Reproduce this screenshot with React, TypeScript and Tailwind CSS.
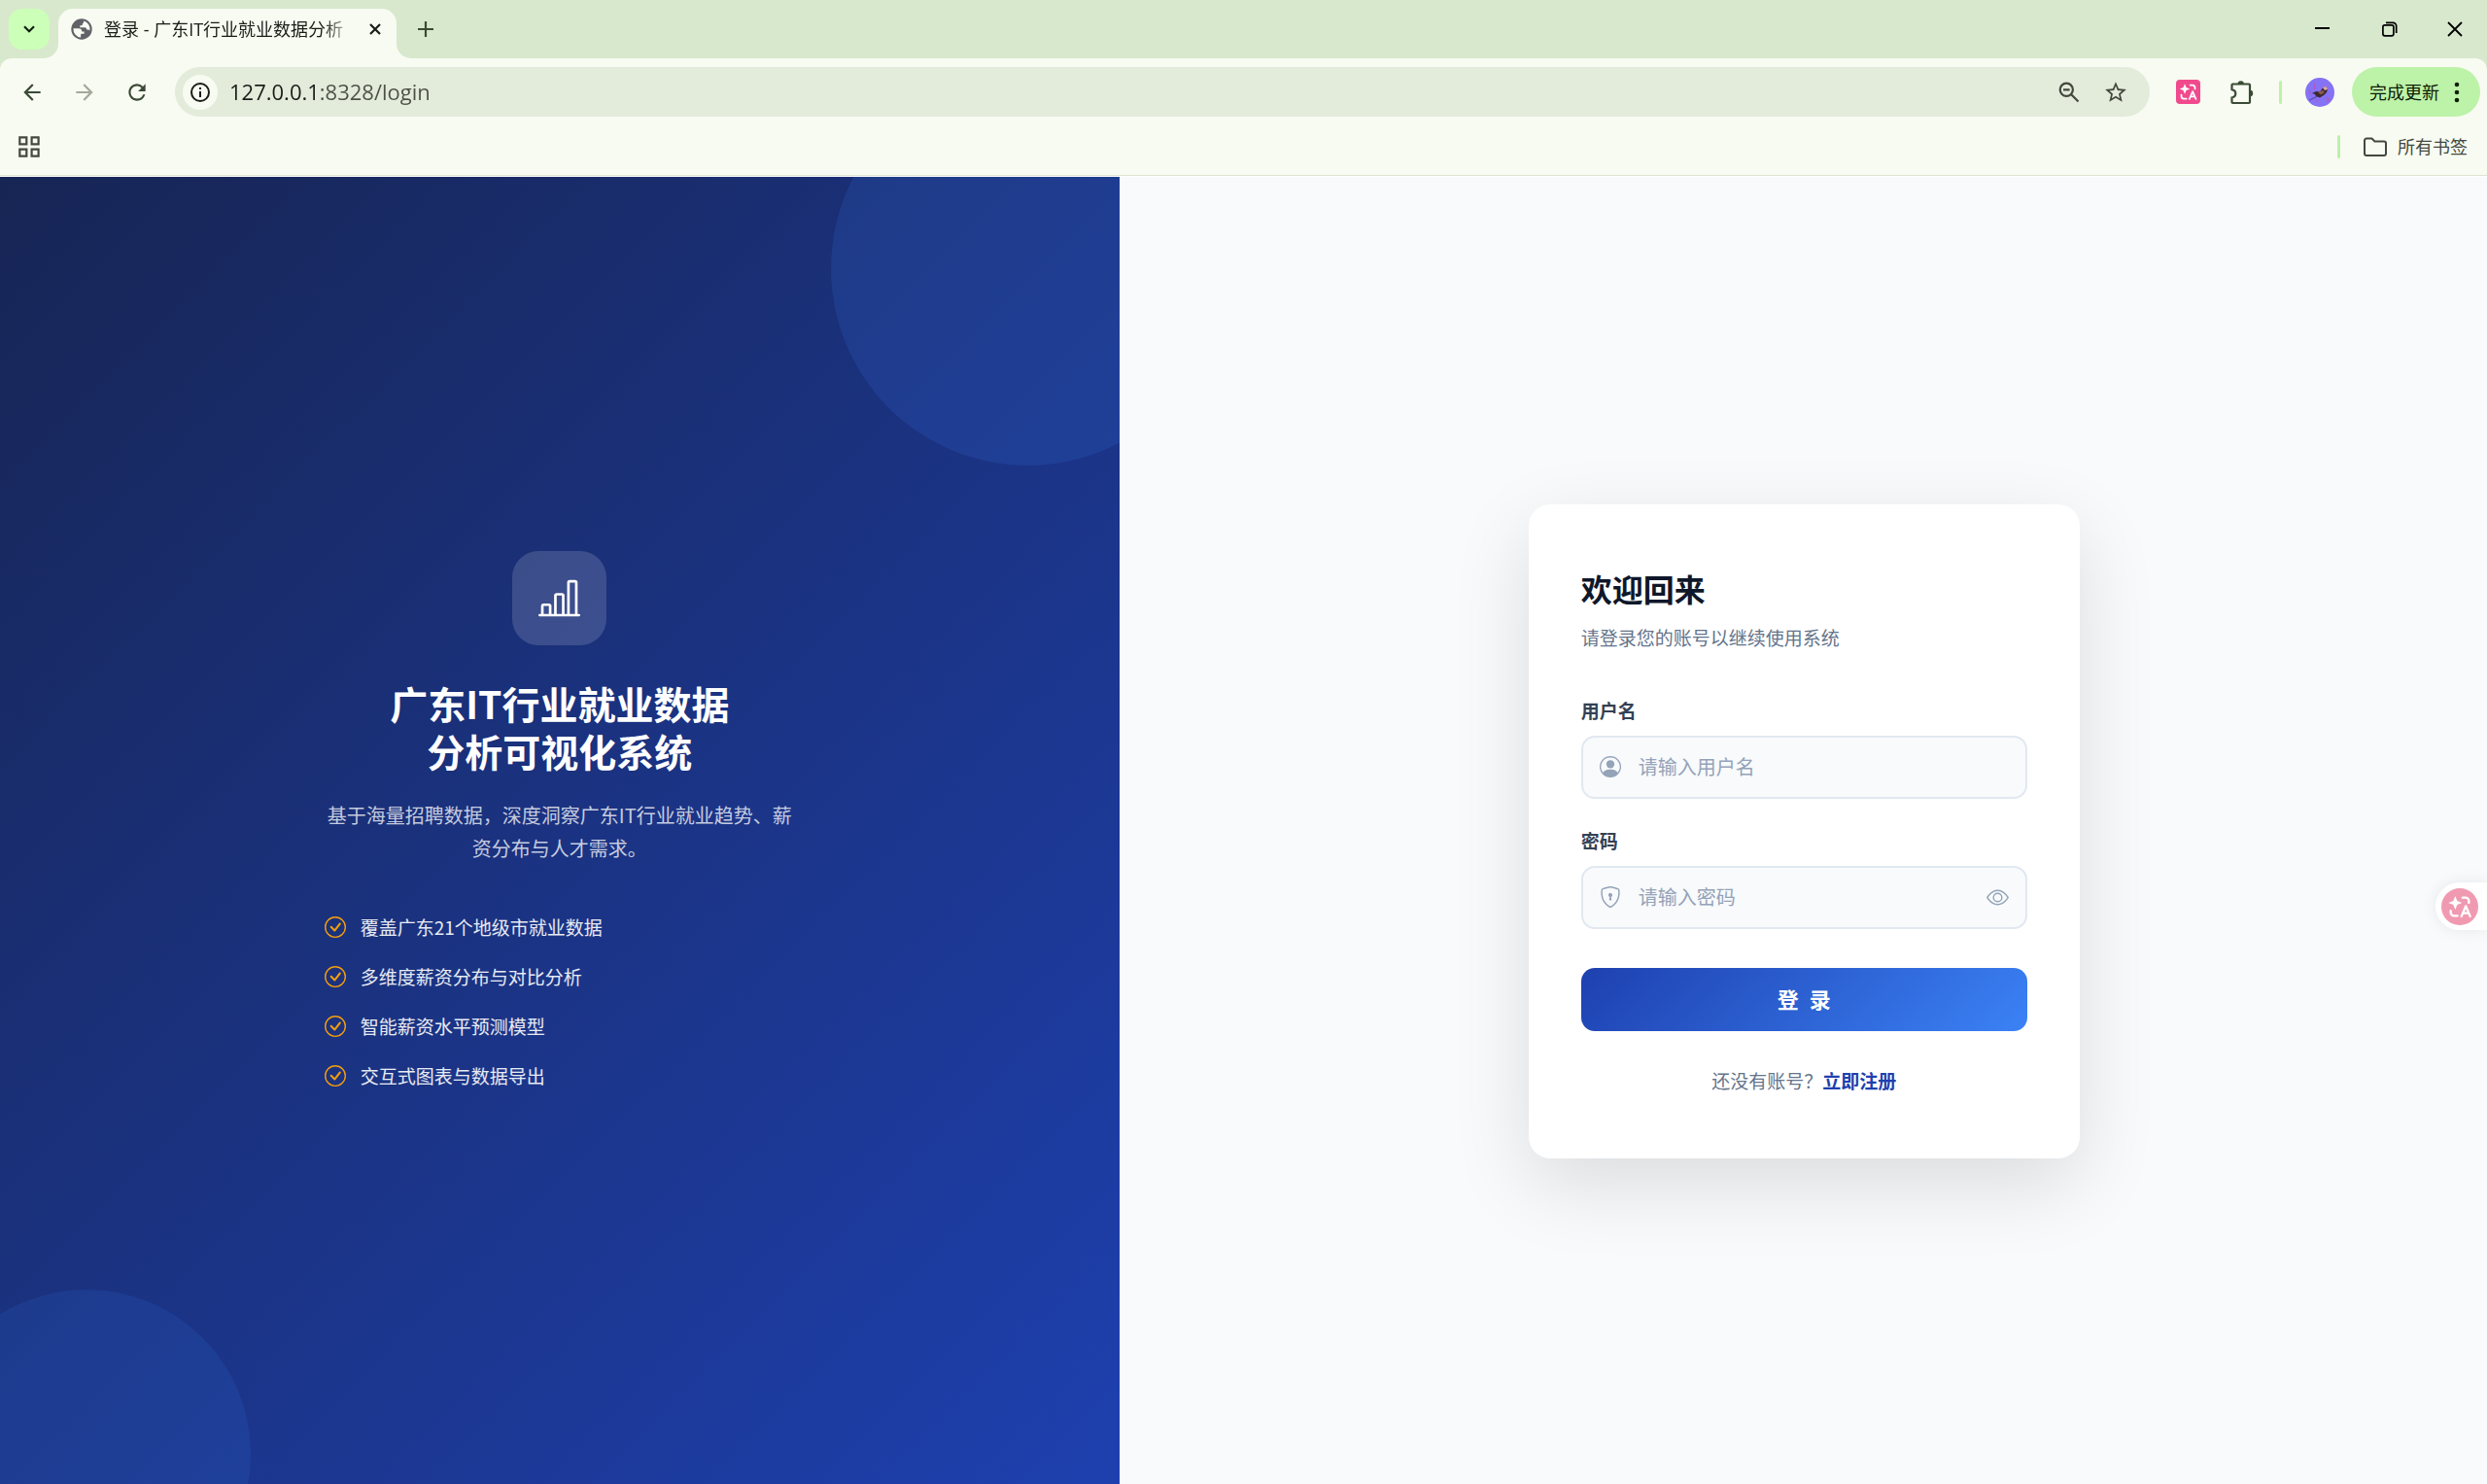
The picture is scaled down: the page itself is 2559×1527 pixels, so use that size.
import React from "react";
import {
  BsBarChartLine,
  BsCheckCircle,
  BsEye,
  BsPersonCircle,
  BsShieldLock,
} from "react-icons/bs";
import {
  MdArrowBack,
  MdArrowForward,
  MdRefresh,
  MdStarBorder,
} from "react-icons/md";

const uiFont = "font-['Open_Sans','Noto_Sans_CJK_SC',sans-serif]";
const pageFont = "font-['Noto_Sans_CJK_SC',sans-serif]";

function Globe() {
  return (
    <svg viewBox="0 0 22 22" className="size-[22px] shrink-0" aria-hidden="true">
      <circle cx="11" cy="11" r="10.7" fill="#5f6368" />
      <path
        d="M12.9 2.600A8.600 8.600 0 0 1 19.500 12.500c-.5-.7-1.200-1-2.100-1h-1.200c0-1.500-.8-2.300-2.200-2.300H9.300V7.300h1.200c1 0 1.500-.6 1.400-1.500-.1-.6.2-.9.8-1 .6-.3.500-1.200.2-2.200Z"
        fill="#f8fbf1"
      />
      <path
        d="M2.500 10.200h5.300c2.400 0 3.500 1.200 3.500 3.300h2.300v2.300h-2.300c-.8 0-1.200.4-1.200 1.200v2.500A8.600 8.600 0 0 1 2.500 10.200Z"
        fill="#f8fbf1"
      />
    </svg>
  );
}

function Puzzle() {
  return (
    <svg viewBox="0 0 26 26" className="size-[26px]" fill="none" aria-hidden="true">
      <path
        d="M3 4.500h17a1 1 0 0 1 1 1V23a1 1 0 0 1-1 1H3.500a1 1 0 0 1-1-1v-4.500c2.500-.5 3.800-2 3.800-4.200s-1.300-3.700-3.800-4.200V5.500a1 1 0 0 1 1-1Z"
        stroke="#3a4a35"
        strokeWidth="2.200"
      />
      <path d="M8.500 4.500a3.200 3.200 0 0 1 6.400 0ZM21 10.800a3.200 3.200 0 0 1 0 6.400Z" fill="#3a4a35" />
    </svg>
  );
}

function TranslateGlyph({ className }: { className: string }) {
  return (
    <svg viewBox="0 0 24 24" className={className} fill="none" aria-hidden="true">
      <path d="M8 2.500 9.700 6.800l4.300 1.700-4.300 1.700L8 14.500l-1.700-4.300L2 8.500l4.300-1.700Z" fill="#fff" />
      <path
        d="M14.500 4H17a3 3 0 0 1 3 3v1.500M4 15.500V17a3 3 0 0 0 3 3h3"
        stroke="#fff"
        strokeWidth="2"
        strokeLinecap="round"
      />
      <path
        d="m13.500 20.500 3.800-9 3.800 9M14.800 17.700h5"
        stroke="#fff"
        strokeWidth="2"
        strokeLinecap="round"
        strokeLinejoin="round"
      />
    </svg>
  );
}

function Avatar() {
  return (
    <svg viewBox="0 0 30 30" className="size-[30px]" aria-hidden="true">
      <circle cx="15" cy="15" r="15" fill="#8672f5" />
      <path d="M4 22.500 13 18l-1 2-8 4Z" fill="#5b50b8" />
      <path d="M9 6l1 3-1 3M22 20l2 2-1 3M4 13l1 4M11 24l2-1" stroke="#b05ac0" strokeWidth="1.500" fill="none" />
      <path d="M7 16l4-2 4 .5 3-4 4-1.500 1 3-1 3-3 3-4 2.500-4-1.500-1-2Z" fill="#3c2a33" />
      <path d="M18 10l4-1 1 3-3 1Z" fill="#e0a99a" />
      <path d="M13 15l5-2 2 2-4 2.500Z" fill="#8b5a4e" />
    </svg>
  );
}

function TabStrip() {
  return (
    <div className="flex h-[60px] items-start bg-[#d8e8cd]">
      <div className="flex h-full w-[60px] flex-col bg-[#f8fbf1]">
        <div className="h-full rounded-br-[15px] bg-[#d8e8cd] pl-[9px] pt-[9px]">
          <button
            aria-label="搜索标签页"
            className="flex size-[42px] items-center justify-center rounded-[14px] bg-[#ccffb8]"
          >
            <svg viewBox="0 0 12 8" className="h-2 w-3" fill="none" aria-hidden="true">
              <path d="m1 1.200 5 5 5-5" stroke="#10200f" strokeWidth="2.200" />
            </svg>
          </button>
        </div>
      </div>
      <div className="h-full bg-[#d8e8cd] pt-[9px]">
        <div className="flex h-[51px] w-[348px] items-center rounded-t-[15px] bg-[#f8fbf1] pb-[9px] pl-[13px] pr-3">
          <Globe />
          <span className="ml-3 flex-1 whitespace-nowrap text-lg text-[#1b1c18] [mask-image:linear-gradient(to_right,black_225px,transparent_260px)]">
            登录 - 广东IT行业就业数据分析
          </span>
          <button aria-label="关闭标签页" className="ml-4 flex size-5 items-center justify-center">
            <svg viewBox="0 0 12 12" className="size-3" fill="none" aria-hidden="true">
              <path d="m1 1 10 10M11 1 1 11" stroke="#1b1c18" strokeWidth="2.200" />
            </svg>
          </button>
        </div>
      </div>
      <div className="h-full flex-1 bg-[#f8fbf1]">
        <div className="flex h-full items-start justify-between rounded-bl-[15px] bg-[#d8e8cd] pl-[22px]">
          <button aria-label="新标签页" className="mt-[22px] flex size-4 items-center justify-center">
            <svg viewBox="0 0 16 16" className="size-4" fill="none" aria-hidden="true">
              <path d="M8 0v16M0 8h16" stroke="#3a4a35" strokeWidth="2.200" />
            </svg>
          </button>
          <div className="flex h-[60px] items-center">
            <button aria-label="最小化" className="flex h-full w-[69px] items-center justify-center">
              <svg viewBox="0 0 16 16" className="size-4" aria-hidden="true">
                <path d="M0 7h15" stroke="#000" strokeWidth="2" />
              </svg>
            </button>
            <button aria-label="还原" className="flex h-full w-[69px] items-center justify-center">
              <svg viewBox="0 0 16 16" className="size-4" fill="none" stroke="#000" strokeWidth="1.700" aria-hidden="true">
                <rect x="0.900" y="3.800" width="11" height="11" rx="2" />
                <path d="M4 1.300h7.200a3.500 3.500 0 0 1 3.500 3.500V12" />
              </svg>
            </button>
            <button aria-label="关闭" className="flex h-full w-[66px] items-center justify-center">
              <svg viewBox="0 0 16 16" className="size-4" fill="none" aria-hidden="true">
                <path d="m1 1 14 14M15 1 1 15" stroke="#000" strokeWidth="1.800" />
              </svg>
            </button>
          </div>
        </div>
      </div>
    </div>
  );
}

function Toolbar() {
  return (
    <div className="bg-[#d8e8cd]">
      <div className="flex h-[69px] items-center rounded-t-[12px] bg-[#f8fbf1] pl-5 pr-[7px]">
        <button aria-label="后退" className="text-[#3a4a35]">
          <MdArrowBack className="size-[26px]" />
        </button>
        <button aria-label="前进" className="ml-7 text-[#a3aa9c]">
          <MdArrowForward className="size-[26px]" />
        </button>
        <button aria-label="重新加载" className="ml-7 text-[#3a4a35]">
          <MdRefresh className="size-[26px]" />
        </button>
        <div className="ml-[26px] flex h-[51px] flex-1 items-center rounded-full bg-[#e3ecdb] pl-2 pr-[22px]">
          <button
            aria-label="查看网站信息"
            className="flex size-9 shrink-0 items-center justify-center rounded-full bg-[#f8fbf1]"
          >
            <svg viewBox="0 0 20 20" className="size-5" fill="none" stroke="#1b1c18" strokeWidth="2" aria-hidden="true">
              <circle cx="10" cy="10" r="9" />
              <path d="M10 9v6M10 5v2" />
            </svg>
          </button>
          <input
            aria-label="地址"
            defaultValue="127.0.0.1:8328/login"
            className="ml-3 min-w-0 flex-1 bg-[linear-gradient(to_right,#1b1c18_90px,#4c5147_90px)] bg-clip-text pb-[2px] text-[22px] leading-[34px] text-transparent caret-[#1b1c18] outline-none"
          />
          <button aria-label="缩放">
            <svg viewBox="0 0 22 22" className="size-[22px]" fill="none" stroke="#43483e" strokeWidth="2.200" aria-hidden="true">
              <circle cx="8.300" cy="8.300" r="6.600" />
              <path d="m13 13 7.500 7.500M5 8.300h6.600" />
            </svg>
          </button>
          <button aria-label="为此标签页添加书签" className="ml-6 text-[#43483e]">
            <MdStarBorder className="size-[26px]" />
          </button>
        </div>
        <button
          aria-label="翻译扩展"
          className="ml-[27px] flex size-[25px] items-center justify-center rounded-[4px] bg-[#f04a8d]"
        >
          <TranslateGlyph className="size-[21px]" />
        </button>
        <button aria-label="扩展程序" className="ml-[30px]">
          <Puzzle />
        </button>
        <div className="ml-[25px] h-6 w-[3px] rounded-full bg-[#bdf2a9]" />
        <button aria-label="个人资料" className="ml-6">
          <Avatar />
        </button>
        <button className="ml-[18px] flex h-[51px] w-[132px] items-center rounded-full bg-[#bdf2a9] pl-[18px] text-lg text-[#0c2006]">
          完成更新
          <svg viewBox="0 0 6 22" className="ml-[15px] h-[22px] w-[6px]" fill="#0c2006" aria-hidden="true">
            <circle cx="3" cy="3" r="2.300" />
            <circle cx="3" cy="11" r="2.300" />
            <circle cx="3" cy="19" r="2.300" />
          </svg>
        </button>
      </div>
    </div>
  );
}

function BookmarkBar() {
  return (
    <div className="border-b border-[#dfe3d3] bg-[#f8fbf1]">
      <div className="flex h-[51px] items-center justify-between pb-2 pl-[19px] pr-5">
        <button aria-label="应用">
          <svg viewBox="0 0 22 22" className="size-[22px]" fill="none" stroke="#43483e" strokeWidth="2.200" aria-hidden="true">
            <path d="M1.300 1.300h7v7h-7ZM13.600 1.300h7v7h-7ZM1.300 13.600h7v7h-7ZM13.600 13.600h7v7h-7Z" />
          </svg>
        </button>
        <div className="flex items-center">
          <div className="h-6 w-[3px] rounded-full bg-[#bdf2a9]" />
          <button className="ml-6 flex items-center gap-[11px] text-lg text-[#43483e]">
            <svg viewBox="0 0 24 20" className="h-5 w-6" fill="none" stroke="#43483e" strokeWidth="2" aria-hidden="true">
              <path d="M3 1.500h5.500l3 3H21a2 2 0 0 1 2 2V17a2 2 0 0 1-2 2H3a2 2 0 0 1-2-2V3.500a2 2 0 0 1 2-2Z" />
            </svg>
            所有书签
          </button>
        </div>
      </div>
    </div>
  );
}

const features = [
  "覆盖广东21个地级市就业数据",
  "多维度薪资分布与对比分析",
  "智能薪资水平预测模型",
  "交互式图表与数据导出",
];

function BrandPanel() {
  return (
    <section className="relative flex w-[45%] items-center justify-center overflow-hidden bg-[linear-gradient(135deg,#172554_0%,#1e40af_100%)]">
      <div className="absolute -right-[108px] -top-[108px] size-[405px] rounded-full bg-[#3b82f6]/15" />
      <div className="absolute -bottom-[138px] -left-[80px] size-[338px] rounded-full bg-[#3b82f6]/12" />
      <div className="relative flex w-[486px] flex-col items-center pb-5">
        <div className="flex size-[97px] items-center justify-center rounded-[27px] bg-white/15 text-white">
          <BsBarChartLine className="size-[43px]" />
        </div>
        <h1 className="mt-[35px] text-center text-[39px] font-bold leading-[49px] text-white">
          广东IT行业就业数据
          <br />
          分析可视化系统
        </h1>
        <p className="mt-[25px] text-center text-xl leading-[34px] text-white/75">
          基于海量招聘数据，深度洞察广东IT行业就业趋势、薪资分布与人才需求。
        </p>
        <ul className="mt-[49px] flex flex-col gap-[21px] self-stretch">
          {features.map((f) => (
            <li key={f} className="flex items-center gap-[14px] text-[19px] leading-[30px] text-white/90">
              <span className="flex w-6 justify-center text-[#f59e0b]">
                <BsCheckCircle className="size-[22px]" />
              </span>
              {f}
            </li>
          ))}
        </ul>
      </div>
    </section>
  );
}

function Field({
  id,
  label,
  type,
  placeholder,
  icon,
  trailing,
}: {
  id: string;
  label: string;
  type: string;
  placeholder: string;
  icon: React.ReactNode;
  trailing?: React.ReactNode;
}) {
  return (
    <div className="flex flex-col gap-[11px]">
      <label htmlFor={id} className="text-[19px] font-bold leading-[30px] text-[#334155]">
        {label}
      </label>
      <div className="flex h-[65px] items-center rounded-[14px] border-2 border-[#e2e8f0] bg-[#f8fafc] px-[17px] text-[#94a3b8]">
        {icon}
        <input
          id={id}
          type={type}
          placeholder={placeholder}
          className="ml-[18px] min-w-0 flex-1 bg-transparent text-xl text-[#0f172a] outline-none placeholder:text-[#94a3b8]"
        />
        {trailing}
      </div>
    </div>
  );
}

function LoginCard() {
  return (
    <form className="w-[567px] rounded-[22px] bg-white px-[54px] pb-[65px] pt-[63px] shadow-[0_27px_81px_rgba(0,0,0,0.12)]">
      <h2 className="text-[32px] font-bold leading-[46px] text-[#0f172a]">欢迎回来</h2>
      <p className="mt-[13px] text-[19px] leading-[30px] text-[#64748b]">请登录您的账号以继续使用系统</p>
      <div className="mt-[45px] flex flex-col gap-7">
        <Field
          id="username"
          label="用户名"
          type="text"
          placeholder="请输入用户名"
          icon={<BsPersonCircle className="size-[22px] shrink-0" />}
        />
        <Field
          id="password"
          label="密码"
          type="password"
          placeholder="请输入密码"
          icon={<BsShieldLock className="size-[22px] shrink-0" />}
          trailing={
            <button type="button" aria-label="显示密码">
              <BsEye className="size-[23px]" />
            </button>
          }
        />
      </div>
      <button
        type="button"
        className="mt-10 h-[65px] w-full rounded-[14px] bg-[linear-gradient(135deg,#1e40af,#3b82f6)] pb-[2px] text-[22px] font-bold text-white"
      >
        登&ensp;录
      </button>
      <p className="mt-9 text-center text-[19px] leading-[30px] text-[#64748b]">
        还没有账号？
        <a href="#register" className="font-bold text-[#1e40af]">
          立即注册
        </a>
      </p>
    </form>
  );
}

export default function App() {
  return (
    <div className="flex min-h-screen flex-col bg-white">
      <header className={uiFont}>
        <TabStrip />
        <Toolbar />
        <BookmarkBar />
      </header>
      <main className={`relative mt-px flex flex-1 ${pageFont}`}>
        <BrandPanel />
        <section className="flex flex-1 items-center justify-center bg-[#f8fafc] pl-[2px] pt-px">
          <LoginCard />
        </section>
        <button
          aria-label="翻译此页"
          className="absolute right-0 top-[726px] flex h-[49px] w-[53px] items-center rounded-l-full bg-white pl-[6px] shadow-[0_0_16px_rgba(0,0,0,0.08)]"
        >
          <span className="flex size-[38px] items-center justify-center rounded-full bg-[#f09ab2]">
            <TranslateGlyph className="size-[28px]" />
          </span>
        </button>
      </main>
    </div>
  );
}
